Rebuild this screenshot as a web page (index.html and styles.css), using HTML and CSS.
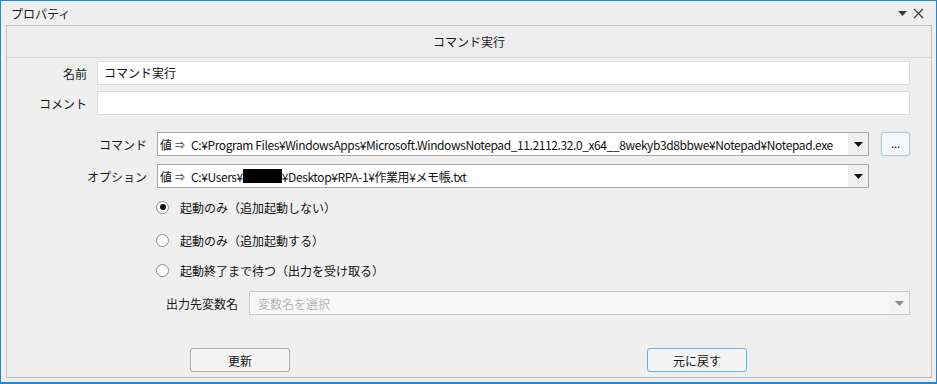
FILE: index.html
```html
<!DOCTYPE html>
<html lang="ja">
<head>
<meta charset="utf-8">
<link rel="stylesheet" href="styles.css">
</head>
<body>
<div class="window">
  <div class="titlebar">
    <span class="title">プロパティ</span>
    <div class="tb-icons">
      <svg class="tb-menu" width="9" height="5" viewBox="0 0 9 5"><path d="M0 0H9L4.5 5Z" fill="#3c3c3c"/></svg>
      <svg class="tb-close" width="11" height="11" viewBox="0 0 11 11"><path d="M1 1L10 10M10 1L1 10" stroke="#444" stroke-width="1.3"/></svg>
    </div>
  </div>
  <div class="panel">
    <div class="panel-head">コマンド実行</div>
    <div class="panel-body">
      <div class="row row-name">
        <label class="lbl lbl-short">名前</label>
        <div class="textbox">コマンド実行</div>
      </div>
      <div class="row row-comment">
        <label class="lbl lbl-short">コメント</label>
        <div class="textbox"></div>
      </div>
      <div class="row row-cmd">
        <label class="lbl lbl-long">コマンド</label>
        <div class="combo">
          <div class="combo-text"><span class="val">値</span><span class="arrow">⇒</span><span class="path">C:¥Program Files¥WindowsApps¥Microsoft.WindowsNotepad_11.2112.32.0_x64__8wekyb3d8bbwe¥Notepad¥Notepad.exe</span></div>
          <div class="combo-btn"><svg width="9" height="5" viewBox="0 0 9 5"><path d="M0 0H9L4.5 5Z" fill="#111"/></svg></div>
        </div>
        <button class="btn-dots">...</button>
      </div>
      <div class="row row-opt">
        <label class="lbl lbl-long">オプション</label>
        <div class="combo">
          <div class="combo-text"><span class="val">値</span><span class="arrow">⇒</span><span class="path">C:¥Users¥<span class="redact"></span>¥Desktop¥RPA-1¥作業用¥メモ帳.txt</span></div>
          <div class="combo-btn"><svg width="9" height="5" viewBox="0 0 9 5"><path d="M0 0H9L4.5 5Z" fill="#111"/></svg></div>
        </div>
      </div>
      <div class="radios">
        <div class="radio r1"><span class="dot checked"></span><span>起動のみ（追加起動しない）</span></div>
        <div class="radio r2"><span class="dot"></span><span>起動のみ（追加起動する）</span></div>
        <div class="radio r3"><span class="dot"></span><span>起動終了まで待つ（出力を受け取る）</span></div>
      </div>
      <div class="row row-out">
        <label class="lbl-out">出力先変数名</label>
        <div class="combo disabled">
          <div class="combo-text placeholder">変数名を選択</div>
          <div class="combo-btn"><svg width="9" height="5" viewBox="0 0 9 5"><path d="M0 0H9L4.5 5Z" fill="#888"/></svg></div>
        </div>
      </div>
      <div class="buttons">
        <button class="btn btn-update">更新</button>
        <button class="btn btn-reset">元に戻す</button>
      </div>
    </div>
  </div>
</div>
</body>
</html>
```

FILE: styles.css
```css
* { box-sizing: border-box; }
html, body { margin: 0; padding: 0; }
body {
  font-family: "Noto Sans CJK JP", "Noto Sans", sans-serif;
  font-size: 12px;
  color: #111;
  background: #f0f0f0;
}
.window {
  width: 937px;
  height: 384px;
  border: 1px solid #1e88dc;
  border-bottom-width: 2px;
  background: #efefef;
  display: flex;
  flex-direction: column;
}
.titlebar {
  height: 24px;
  display: flex;
  align-items: center;
  padding: 0 0 0 10px;
  flex-shrink: 0;
}
.title { font-size: 12px; color: #1a1a1a; }
.tb-icons {
  margin-left: auto;
  display: flex;
  align-items: center;
  gap: 6px;
  padding-right: 12px;
}
.tb-menu { margin-top: 1px; }
.panel {
  margin: 0 4px 4px 5px;
  border: 1px solid #bfbfbf;
  flex: 1;
  display: flex;
  flex-direction: column;
}
.panel-head {
  height: 32px;
  border-bottom: 1px solid #d6d6d6;
  display: flex;
  align-items: center;
  justify-content: center;
  color: #1a1a1a;
  background: #ededed;
}
.panel-body {
  padding: 3px 21px 0 0;
  display: flex;
  flex-direction: column;
}
.row {
  display: flex;
  align-items: center;
}
.lbl {
  text-align: right;
  flex-shrink: 0;
  color: #1a1a1a;
}
.lbl-short { width: 80px; margin-right: 10px; }
.lbl-long { width: 140px; margin-right: 10px; }
.textbox {
  flex: 1;
  height: 24px;
  background: #fff;
  border: 1px solid #dcdcdc;
  padding: 0 6px;
  line-height: 22px;
}
.row-comment { margin-top: 6px; }
.row-cmd { margin-top: 17px; }
.row-opt { margin-top: 8px; padding-right: 41px; }
.combo {
  flex: 1;
  min-width: 0;
  height: 24px;
  background: #fff;
  border: 1px solid #a9a9a9;
  display: flex;
  align-items: stretch;
}
.combo-text {
  flex: 1;
  min-width: 0;
  display: flex;
  align-items: center;
  padding-left: 2px;
  white-space: nowrap;
  overflow: hidden;
}
.val { margin-right: 3px; }
.arrow { font-size: 10px; color: #444; margin-right: 6px; }
.path { letter-spacing: -0.4px; display: inline-flex; align-items: center; }
.redact {
  display: inline-block;
  width: 39px;
  height: 14px;
  background: #000;
  margin: 0 0 0 0;
}
.combo-btn {
  width: 20px;
  flex-shrink: 0;
  background: #f0f0f0;
  display: flex;
  align-items: center;
  justify-content: center;
}
.btn-dots {
  width: 29px;
  height: 24px;
  flex-shrink: 0;
  margin-left: 12px;
  border: 1px solid #b3c7dc;
  border-radius: 3px;
  background: #f6f6f6;
  font: inherit;
  font-size: 11px;
  padding: 0 0 3px;
  box-shadow: 0 0 2px rgba(80, 150, 220, 0.35);
}
.radios {
  padding-left: 149px;
  margin-top: 10px;
  display: flex;
  flex-direction: column;
}
.radio {
  display: flex;
  align-items: center;
  height: 18px;
  gap: 11px;
}
.r2 { margin-top: 15px; }
.r3 { margin-top: 12px; }
.dot {
  width: 13px;
  height: 13px;
  border: 1px solid #8c8c8c;
  border-radius: 50%;
  background: #fff;
  display: inline-flex;
  align-items: center;
  justify-content: center;
}
.dot.checked::after {
  content: "";
  width: 6px;
  height: 6px;
  border-radius: 50%;
  background: #111;
}
.row-out { margin-top: 12px; padding-left: 159px; }
.lbl-out { margin-right: 11px; color: #1a1a1a; }
.combo.disabled {
  background: #f7f7f7;
  border-color: #c8c8c8;
}
.combo.disabled .combo-btn { background: #f3f3f3; }
.placeholder { color: #b8b8b8; padding-left: 8px; }
.buttons {
  margin-top: 33px;
  display: flex;
  padding-left: 183px;
}
.btn {
  width: 100px;
  height: 24px;
  border: 1px solid #adadad;
  border-radius: 3px;
  background: #f4f4f4;
  font: inherit;
  color: #111;
  padding: 0;
}
.btn-reset {
  margin-left: 357px;
  border-color: #63b2f2;
}
```
